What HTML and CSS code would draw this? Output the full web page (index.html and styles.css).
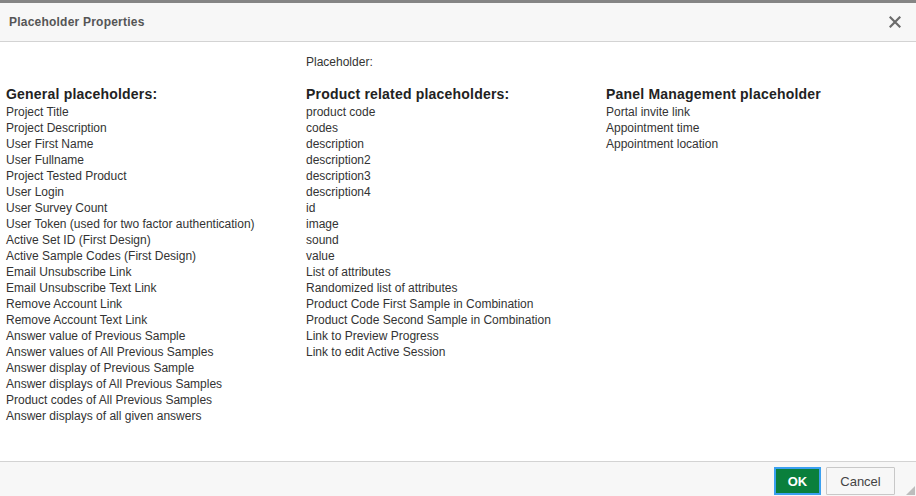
FILE: index.html
```html
<!DOCTYPE html>
<html>
<head>
<meta charset="utf-8">
<link rel="stylesheet" href="styles.css">
</head>
<body>
<div class="backdrop"></div>
<div class="dialog">
  <div class="header">
    <span class="title">Placeholder Properties</span>
    <svg class="close" width="12" height="12" viewBox="0 0 12 12"><path d="M1.5 1.5 L10.5 10.5 M10.5 1.5 L1.5 10.5" stroke="#6b6b6b" stroke-width="2.2" stroke-linecap="square"/></svg>
  </div>
  <div class="content">
    <div class="grid">
      <div class="label-row"><span></span><span>Placeholder:</span><span></span></div>
      <div class="col">
        <div class="heading">General placeholders:</div>
        <div>Project Title</div>
        <div>Project Description</div>
        <div>User First Name</div>
        <div>User Fullname</div>
        <div>Project Tested Product</div>
        <div>User Login</div>
        <div>User Survey Count</div>
        <div>User Token (used for two factor authentication)</div>
        <div>Active Set ID (First Design)</div>
        <div>Active Sample Codes (First Design)</div>
        <div>Email Unsubscribe Link</div>
        <div>Email Unsubscribe Text Link</div>
        <div>Remove Account Link</div>
        <div>Remove Account Text Link</div>
        <div>Answer value of Previous Sample</div>
        <div>Answer values of All Previous Samples</div>
        <div>Answer display of Previous Sample</div>
        <div>Answer displays of All Previous Samples</div>
        <div>Product codes of All Previous Samples</div>
        <div>Answer displays of all given answers</div>
      </div>
      <div class="col">
        <div class="heading">Product related placeholders:</div>
        <div>product code</div>
        <div>codes</div>
        <div>description</div>
        <div>description2</div>
        <div>description3</div>
        <div>description4</div>
        <div>id</div>
        <div>image</div>
        <div>sound</div>
        <div>value</div>
        <div>List of attributes</div>
        <div>Randomized list of attributes</div>
        <div>Product Code First Sample in Combination</div>
        <div>Product Code Second Sample in Combination</div>
        <div>Link to Preview Progress</div>
        <div>Link to edit Active Session</div>
      </div>
      <div class="col">
        <div class="heading">Panel Management placeholder</div>
        <div>Portal invite link</div>
        <div>Appointment time</div>
        <div>Appointment location</div>
      </div>
    </div>
  </div>
  <div class="footer">
    <button class="btn ok">OK</button>
    <button class="btn cancel">Cancel</button>
    <span class="grip"></span>
  </div>
</div>
</body>
</html>
```
FILE: styles.css
```css
html, body {
  margin: 0;
  padding: 0;
  height: 100%;
  overflow: hidden;
}
body {
  font-family: "Liberation Sans", Arial, sans-serif;
  background: #fff;
  color: #333;
}
.backdrop {
  height: 3px;
  background: #858585;
}
.dialog {
  display: flex;
  flex-direction: column;
  height: 493px;
  background: #fff;
}
.header {
  flex: none;
  height: 39px;
  box-sizing: border-box;
  background: #f7f7f7;
  border-bottom: 1px solid #d3d3d3;
  display: flex;
  align-items: center;
  justify-content: space-between;
  padding: 0 15px 0 9px;
}
.title {
  font-size: 12px;
  font-weight: bold;
  color: #555;
  letter-spacing: 0.22px;
  margin-top: 0;
}
.close {
  display: block;
}
.content {
  flex: 1;
  padding: 12px 6px 0;
}
.grid {
  display: grid;
  grid-template-columns: 300px 300px 300px;
  font-size: 12px;
  line-height: 16px;
}
.label-row {
  display: contents;
}
.label-row span {
  margin-bottom: 15px;
}
.heading {
  font-size: 14px;
  font-weight: bold;
  line-height: 18px;
  color: #222;
  letter-spacing: 0.2px;
  margin-bottom: 1px;
}
.footer {
  flex: none;
  height: 35px;
  box-sizing: border-box;
  background: #f7f7f7;
  border-top: 1px solid #d3d3d3;
  display: flex;
  justify-content: flex-end;
  align-items: flex-start;
  padding: 5px 21px 0 0;
  gap: 5px;
  position: relative;
}
.btn {
  font-family: "Liberation Sans", Arial, sans-serif;
  font-size: 13px;
  height: 28px;
  box-sizing: border-box;
  padding: 0;
  cursor: pointer;
}
.ok {
  width: 47px;
  background: #0a7f3c;
  color: #fff;
  font-weight: bold;
  border: 2px solid #3aa0f0;
}
.cancel {
  width: 69px;
  background: #f7f7f7;
  color: #444;
  border: 1px solid #c8c8c8;
  border-radius: 1px;
}
.grip {
  position: absolute;
  right: 1px;
  bottom: 1px;
  width: 0;
  height: 0;
  border-left: 9px solid transparent;
  border-bottom: 9px solid #bdbdbd;
}
```
